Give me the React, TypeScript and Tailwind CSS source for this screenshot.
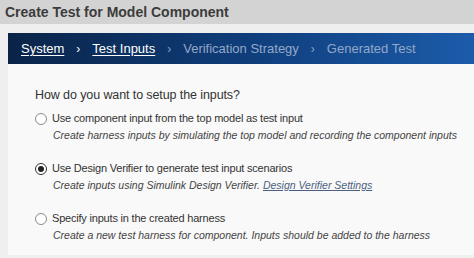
import React from "react";

const steps = [
  { label: "System", done: true },
  { label: "Test Inputs", done: true },
  { label: "Verification Strategy", done: false },
  { label: "Generated Test", done: false },
];

function Radio({ checked }: { checked?: boolean }) {
  return (
    <span
      className={
        "flex h-[12px] w-[12px] shrink-0 items-center justify-center rounded-full border bg-white " +
        (checked ? "border-[#333]" : "border-[#8a8a8a]")
      }
    >
      {checked && <span className="h-[6px] w-[6px] rounded-full bg-[#222]" />}
    </span>
  );
}

function Option({
  checked,
  label,
  children,
}: {
  checked?: boolean;
  label: string;
  children: React.ReactNode;
}) {
  return (
    <div>
      <div className="flex items-center gap-[5px] h-[17px]">
        <Radio checked={checked} />
        <span className="text-[11px] tracking-[-0.2px] text-[#333]">{label}</span>
      </div>
      <div className="pl-[18px] h-[17px] flex items-center whitespace-nowrap text-[10.5px] italic text-[#444]">
        <span>{children}</span>
      </div>
    </div>
  );
}

export default function App() {
  return (
    <div
      className="w-[474px] h-[258px] overflow-hidden bg-[#efefef]"
      style={{ fontFamily: '"Liberation Sans", Arial, sans-serif' }}
    >
      <div className="h-[24px] bg-[#d3d3d3] px-[5px] flex items-center">
        <span className="text-[14px] font-bold text-[#3c3c3c]">Create Test for Model Component</span>
      </div>
      <div className="pt-[9px] pl-[8px]">
        <div className="h-[31px] flex items-center pl-[13px] bg-gradient-to-r from-[#0a2448] via-[#0f3d7a] to-[#1c5cab] text-[13px]">
          {steps.map((s, i) => (
            <React.Fragment key={s.label}>
              {i > 0 && (
                <span
                  className={
                    "px-[12px] text-[12px] " + (steps[i - 1].done && s.done ? "text-white" : "text-[#8ba3c4]")
                  }
                >
                  ›
                </span>
              )}
              <span className={s.done ? "text-white underline underline-offset-2" : "text-[#93a8c8]"}>
                {s.label}
              </span>
            </React.Fragment>
          ))}
        </div>
        <div className="h-[191px] bg-[#f9f9f9] pl-[27px] pt-[22px]">
          <div className="text-[12.5px] tracking-[-0.1px] text-[#333] h-[17px]">How do you want to setup the inputs?</div>
          <div className="mt-[7px] flex flex-col gap-[16px]">
            <Option label="Use component input from the top model as test input">
              Create harness inputs by simulating the top model and recording the component inputs
            </Option>
            <Option checked label="Use Design Verifier to generate test input scenarios">
              Create inputs using Simulink Design Verifier.{" "}
              <span className="underline text-[#4a5f80]">Design Verifier Settings</span>
            </Option>
            <Option label="Specify inputs in the created harness">
              Create a new test harness for component. Inputs should be added to the harness
            </Option>
          </div>
        </div>
      </div>
    </div>
  );
}
